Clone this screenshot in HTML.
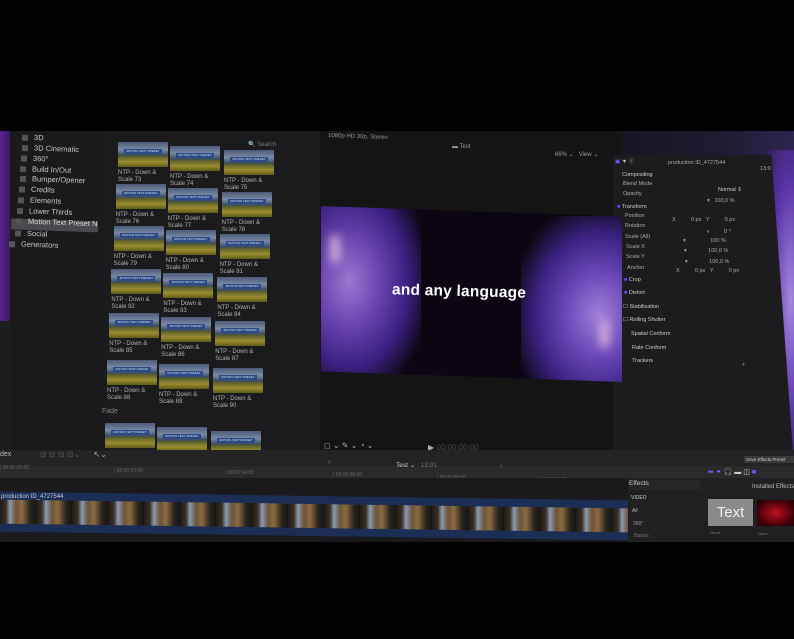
<!DOCTYPE html>
<html><head><meta charset="utf-8">
<style>
*{margin:0;padding:0;box-sizing:border-box}
body{width:794px;height:639px;background:#000;overflow:hidden;position:relative;font-family:"Liberation Sans",sans-serif;color:#aaa}
.a{position:absolute;white-space:nowrap}
.side div{position:absolute;left:20px;font-size:7.5px;color:#c8c8c8;white-space:nowrap;transform:rotate(2deg)}
.side div:before{content:"";display:inline-block;width:6px;height:6px;background:#555;margin-right:6px;vertical-align:middle}
.th{position:absolute;width:50px}
.th .im{height:25px;background:linear-gradient(#4a5a78 0,#7a8aa4 30%,#3a4a60 52%,#5a602a 58%,#9a8c30 80%,#5e5a1a 100%);position:relative}
.th .im:after{content:"MOTION TEXT PRESET";position:absolute;left:6px;right:6px;top:7px;height:5px;background:#2a4a8a;color:#ddd;font-size:3px;text-align:center;line-height:5px}
.th .lb{font-size:6px;color:#b0b0b0;line-height:7px;margin-top:3px}
.insp div{position:absolute;font-size:5.5px;color:#aaa;white-space:nowrap}
</style></head><body>
<div class="a" style="left:0;top:131px;width:794px;height:414px;background:#1d1d1f"></div>
<div class="a" style="left:600px;top:131px;width:194px;height:330px;background:linear-gradient(90deg,#161420,#1e1a30 60%,#2e2450)"></div>
<div class="a" style="left:765px;top:150px;width:29px;height:300px;background:radial-gradient(ellipse at 90% 50%,#a888e0,#5a34a8 55%,#2a1a50)"></div>
<div class="a" style="left:0;top:131px;width:16px;height:190px;background:linear-gradient(90deg,#5a2490,#2a1048);"></div>
<div class="a" style="left:10px;top:131px;width:100px;height:320px;background:#1a1a1c"></div>
<div class="a" style="left:11px;top:220px;width:95px;height:11px;background:#4a4a4e;transform:rotate(2deg)"></div>
<div class="side">
<div style="top:133px;left:22px">3D</div>
<div style="top:144px;left:22px">3D Cinematic</div>
<div style="top:154px;left:21px">360°</div>
<div style="top:165px;left:20px">Build In/Out</div>
<div style="top:175px;left:20px">Bumper/Opener</div>
<div style="top:185px;left:19px">Credits</div>
<div style="top:196px;left:18px">Elements</div>
<div style="top:207px;left:17px">Lower Thirds</div>
<div style="top:218px;left:16px;color:#ddd">Motion Text Preset Nitr...</div>
<div style="top:229px;left:15px">Social</div>
<div style="top:240px;left:9px">Generators</div>
</div>
<div class="a" style="left:98px;top:131px;width:224px;height:320px;background:#1b1b1d"></div>
<div class="a" style="left:248px;top:141px;font-size:6px;color:#777">🔍 Search</div>
<div id="grid"></div>
<div class="a" style="left:102px;top:408px;font-size:7px;color:#888">Fade</div>
<div class="a" style="left:320px;top:131px;width:302px;height:320px;background:#141415"></div>
<div class="a" style="left:328px;top:134px;font-size:6px;color:#999;transform:rotate(2deg)">1080p HD 30p, Stereo</div>
<div class="a" style="left:452px;top:144px;font-size:6px;color:#999">▬ Test</div>
<div class="a" style="left:555px;top:151px;font-size:6px;color:#999">66% ⌄ &nbsp; View ⌄</div>
<div class="a" style="left:612px;top:450px;font-size:7px;color:#aaa">⤢</div>
<!-- inspector -->
<div class="a" style="left:613px;top:155px;width:180px;height:297px;background:#1c1c1e;clip-path:polygon(0 0,88% 0,100% 100%,0 100%)"></div>
<!-- viewer image (on top) -->
<div class="a" style="left:321px;top:206px;width:301px;height:176px;background:#0c0612;clip-path:polygon(0 0,100% 6%,100% 100%,0 94%);overflow:hidden">
  <div class="a" style="left:-30px;top:-10px;width:130px;height:190px;background:radial-gradient(ellipse at 45% 45%,#9a78d0 0,#6a44b0 30%,#3a2080 58%,transparent 82%)"></div>
  <div class="a" style="left:200px;top:10px;width:130px;height:180px;background:radial-gradient(ellipse at 60% 55%,#a080d8 0,#6a48b8 30%,#3a2280 58%,transparent 82%)"></div>
  <div class="a" style="left:10px;top:30px;width:8px;height:26px;background:#f0c8e0;filter:blur(5px)"></div>
  <div class="a" style="left:280px;top:115px;width:7px;height:26px;background:#f0c8e0;filter:blur(5px)"></div>
</div>
<div class="a" style="left:392px;top:283px;font-size:15.5px;font-weight:bold;color:#fff;transform:rotate(1.5deg);letter-spacing:0.2px">and any language</div>
<div class="a" style="left:324px;top:441px;font-size:8px;color:#aaa">◻ ⌄ ✎ ⌄ ◔ ⌄</div>
<div class="a" style="left:428px;top:443px;font-size:8px;color:#aaa">▶ <span style="color:#444">00:00:00:00</span></div>
<div class="insp">
<div style="left:615px;top:157px;color:#66f">▣ <span style="color:#ccc">▼ ⓘ</span></div>
<div style="left:668px;top:160px">production ID_4727544</div>
<div style="left:760px;top:166px">13:0</div>
<div style="left:622px;top:172px;color:#ccc">Compositing</div>
<div style="left:623px;top:181px">Blend Mode</div>
<div style="left:718px;top:187px;color:#ccc">Normal ⇕</div>
<div style="left:623px;top:191px">Opacity</div>
<div style="left:707px;top:198px">▾ &nbsp; 100,0 %</div>
<div style="left:617px;top:204px;color:#ccc"><span style="color:#55f">■</span> Transform</div>
<div style="left:625px;top:213px">Position</div><div style="left:672px;top:217px">X &nbsp;&nbsp;&nbsp;&nbsp;&nbsp;&nbsp;&nbsp;&nbsp; 0 px &nbsp; Y &nbsp;&nbsp;&nbsp;&nbsp;&nbsp;&nbsp;&nbsp;&nbsp; 0 px</div>
<div style="left:625px;top:223px">Rotation</div><div style="left:707px;top:229px">◐ &nbsp;&nbsp;&nbsp;&nbsp;&nbsp;&nbsp;&nbsp; 0 °</div>
<div style="left:625px;top:234px">Scale (All)</div><div style="left:683px;top:238px">▾ &nbsp;&nbsp;&nbsp;&nbsp;&nbsp;&nbsp;&nbsp;&nbsp;&nbsp;&nbsp;&nbsp;&nbsp;&nbsp;&nbsp; 100 %</div>
<div style="left:626px;top:244px">Scale X</div><div style="left:684px;top:248px">▾ &nbsp;&nbsp;&nbsp;&nbsp;&nbsp;&nbsp;&nbsp;&nbsp;&nbsp;&nbsp;&nbsp;&nbsp; 100,0 %</div>
<div style="left:626px;top:254px">Scale Y</div><div style="left:685px;top:259px">▾ &nbsp;&nbsp;&nbsp;&nbsp;&nbsp;&nbsp;&nbsp;&nbsp;&nbsp;&nbsp;&nbsp;&nbsp; 100,0 %</div>
<div style="left:627px;top:265px">Anchor</div><div style="left:676px;top:268px">X &nbsp;&nbsp;&nbsp;&nbsp;&nbsp;&nbsp;&nbsp;&nbsp; 0 px &nbsp; Y &nbsp;&nbsp;&nbsp;&nbsp;&nbsp;&nbsp;&nbsp;&nbsp; 0 px</div>
<div style="left:624px;top:277px;color:#ccc"><span style="color:#55f">■</span> Crop</div>
<div style="left:624px;top:290px;color:#ccc"><span style="color:#55f">■</span> Distort</div>
<div style="left:623px;top:304px;color:#ccc">☐ Stabilization</div>
<div style="left:623px;top:317px;color:#ccc">☐ Rolling Shutter</div>
<div style="left:631px;top:331px;color:#ccc">Spatial Conform</div>
<div style="left:632px;top:345px;color:#ccc">Rate Conform</div>
<div style="left:632px;top:358px;color:#ccc">Trackers</div>
<div style="left:742px;top:362px">+</div>
</div>
<div class="a" style="left:0;top:450px;width:794px;height:16px;background:#232325"></div>
<div class="a" style="left:0;top:466px;width:794px;height:12px;background:#2a2a2c"></div>
<div class="a" style="left:0;top:451px;font-size:7px;color:#bbb">dex</div>
<div class="a" style="left:40px;top:450px;font-size:8px;color:#555">⊟ ⊟ ⊟ ⊟⌄ &nbsp;&nbsp;&nbsp;&nbsp; <span style="color:#aaa">↖⌄</span></div>
<div class="a" style="left:328px;top:459px;font-size:7px;color:#888">‹</div>
<div class="a" style="left:396px;top:461px;font-size:6.5px;color:#ccc">Test ⌄ &nbsp; <span style="color:#777">13:01</span></div>
<div class="a" style="left:500px;top:463px;font-size:7px;color:#888">›</div>
<div class="a" style="left:744px;top:456px;width:50px;height:7px;background:#3a3a3c;font-size:4.5px;color:#ccc;line-height:7px;padding-left:2px">Save Effects Preset</div>
<div class="a" style="left:708px;top:468px;font-size:7px;color:#66f">⬌ ✦ <span style="color:#ccc">🎧 ▬ ◫</span> ■</div>
<div class="a" style="left:0;top:465px;font-size:5px;color:#666">| 00:00:00:00</div>
<div class="a" style="left:114px;top:468px;font-size:5px;color:#666">| 00:00:02:00</div>
<div class="a" style="left:225px;top:470px;font-size:5px;color:#666">| 00:00:04:00</div>
<div class="a" style="left:333px;top:472px;font-size:5px;color:#666">| 00:00:06:00</div>
<div class="a" style="left:437px;top:475px;font-size:5px;color:#666">| 00:00:08:00</div>
<div class="a" style="left:538px;top:477px;font-size:5px;color:#666">| 00:00:10:00</div>
<div class="a" style="left:0;top:478px;width:628px;height:64px;background:#1a1a1c"></div>
<div class="a" style="left:0;top:496px;width:628px;height:40px;background:#1c2e55;transform:skewY(0.8deg)"></div>
<div class="a" style="left:1px;top:494px;font-size:6px;color:#ccd">production ID_4727544</div>
<div class="a" style="left:0;top:504px;width:628px;height:24px;transform:skewY(0.8deg);background:repeating-linear-gradient(90deg,#201a16 0,#3a3028 6px,#8a9ab0 10px,#6a5438 16px,#8a6a40 22px,#2a241e 30px,#181410 36px)"></div>
<div class="a" style="left:628px;top:478px;width:166px;height:67px;background:#202022"></div>
<div class="a" style="left:628px;top:480px;width:72px;height:10px;background:#262628;font-size:6.5px;color:#ccc;padding-left:1px">Effects</div>
<div class="a" style="left:752px;top:484px;font-size:6px;color:#bbb">Installed Effects</div>
<div class="a" style="left:631px;top:495px;font-size:5px;color:#ccc">VIDEO</div>
<div class="a" style="left:632px;top:508px;font-size:5px;color:#bbb">All</div>
<div class="a" style="left:633px;top:521px;font-size:5px;color:#999">360°</div>
<div class="a" style="left:634px;top:533px;font-size:5px;color:#777">Basics</div>
<div class="a" style="left:708px;top:499px;width:45px;height:27px;background:#8a8a8a;color:#eee;font-size:15px;text-align:center;line-height:27px">Text</div>
<div class="a" style="left:757px;top:500px;width:37px;height:26px;background:radial-gradient(ellipse,#c01020,#400008 70%,#1a0004)"></div>
<div class="a" style="left:710px;top:530px;font-size:4px;color:#777">Decal</div>
<div class="a" style="left:758px;top:531px;font-size:4px;color:#777">Neon</div>
<div class="a" style="left:0;top:542px;width:794px;height:97px;background:#000"></div>
<div class="a" style="left:0;top:0;width:794px;height:131px;background:#000"></div>
<script>
var g=document.getElementById('grid'),h='';
var rows=[142,184,226,269,313,360,423];var n=73;
for(var r=0;r<rows.length;r++){for(var c=0;c<3;c++){
var x=[118,170,224][c]-r*2.2, y=rows[r]+c*4;
var lab=r<6?('NTP - Down &amp;<br>Scale '+(n++)):'';
h+='<div class="th" style="left:'+x+'px;top:'+y+'px"><div class="im"></div><div class="lb">'+lab+'</div></div>';}}
g.innerHTML=h;
</script>
</body></html>
